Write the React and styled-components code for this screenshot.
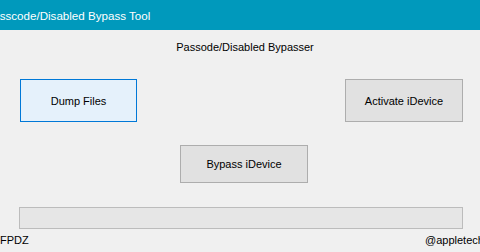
import React from 'react';
import styled, { createGlobalStyle } from 'styled-components';

const GlobalStyle = createGlobalStyle`
  html, body {
    margin: 0;
    padding: 0;
    background: #f0f0f0;
  }
  body {
    font-family: "Liberation Sans", Arial, sans-serif;
    overflow: hidden;
  }
`

export default function App() {
  return (
    <>
      <GlobalStyle />
      <Window>
        <TitleBar>
          <TitleText>Passcode/Disabled Bypass Tool</TitleText>
        </TitleBar>
        <Body>
          <Caption>Passode/Disabled Bypasser</Caption>
          <ButtonRow>
            <Button $focused>Dump Files</Button>
            <Button>Activate iDevice</Button>
          </ButtonRow>
          <CenterRow>
            <Button $wide>Bypass iDevice</Button>
          </CenterRow>
          <Progress />
          <Footer>
            <FooterText>FPDZ</FooterText>
            <Handle>@appletech</Handle>
          </Footer>
        </Body>
      </Window>
    </>
  )
}

const Window = styled.div`
  width: 480px;
  height: 252px;
  background: #f0f0f0;
  overflow: hidden;
  display: flex;
  flex-direction: column;
`
const TitleBar = styled.div`
  height: 30px;
  background: #0099bc;
  display: flex;
  align-items: center;
  overflow: hidden;
`
const TitleText = styled.span`
  margin-left: -14.5px;
  margin-top: 1px;
  color: #fff;
  font-size: 11.6px;
  white-space: nowrap;
`
const Body = styled.div`
  display: flex;
  flex-direction: column;
`
const Caption = styled.div`
  margin-top: 10px;
  padding-left: 10px;
  height: 14px;
  line-height: 14px;
  font-size: 11px;
  color: #000;
  text-align: center;
`
const ButtonRow = styled.div`
  margin-top: 25px;
  padding: 0 17px 0 20px;
  display: flex;
  justify-content: space-between;
`
const CenterRow = styled.div`
  margin-top: 23px;
  padding-left: 180px;
  display: flex;
`
const Button = styled.div`
  box-sizing: border-box;
  width: ${p => (p.$wide ? '128px' : p.$focused ? '117px' : '118px')};
  height: ${p => (p.$wide ? '38px' : '43px')};
  border: 1px solid ${p => (p.$focused ? '#0078d7' : '#adadad')};
  background: ${p => (p.$focused ? '#e5f1fb' : '#e1e1e1')};
  display: flex;
  align-items: center;
  justify-content: center;
  font-size: 11px;
  color: #000;
`
const Progress = styled.div`
  box-sizing: border-box;
  margin: 24px 17px 0 19px;
  height: 22px;
  border: 1px solid #bcbcbc;
  background: #e6e6e6;
`
const Footer = styled.div`
  margin-top: 4px;
  height: 14px;
  display: flex;
  font-size: 11px;
  line-height: 14px;
  color: #000;
  overflow: hidden;
`
const FooterText = styled.span`
  white-space: nowrap;
`
const Handle = styled.span`
  margin-left: auto;
  width: 55px;
  overflow: hidden;
  white-space: nowrap;
`
